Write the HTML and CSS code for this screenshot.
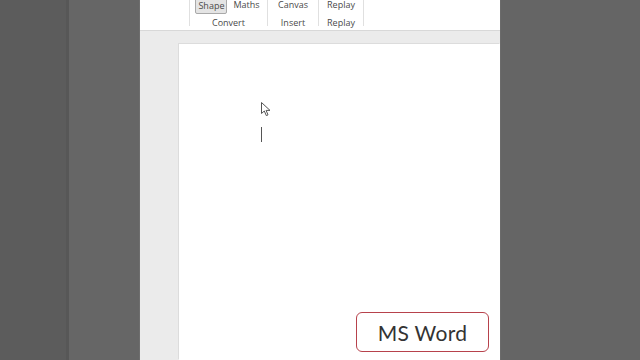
FILE: index.html
```html
<!DOCTYPE html>
<html>
<head>
<meta charset="utf-8">
<link rel="stylesheet" href="styles.css">
</head>
<body>
<div class="stage">
  <div class="side side-left">
    <div class="side-a"></div>
    <div class="side-line"></div>
    <div class="side-b"></div>
  </div>
  <div class="app">
    <div class="ribbon">
      <div class="group group-lead"></div>
      <div class="group g-convert">
        <div class="btns">
          <span class="btn btn-on">Shape</span>
          <span class="btn">Maths</span>
        </div>
        <div class="glabel">Convert</div>
      </div>
      <div class="group g-insert">
        <div class="btns"><span class="btn">Canvas</span></div>
        <div class="glabel">Insert</div>
      </div>
      <div class="group g-replay">
        <div class="btns"><span class="btn">Replay</span></div>
        <div class="glabel">Replay</div>
      </div>
      <div class="group g-rest"></div>
    </div>
    <div class="canvas">
      <div class="page">
        <svg class="pointer" width="11" height="15" viewBox="0 0 11 15">
          <path d="M0.5 0.5 L0.5 11.5 L3.3 9 L5.3 13.6 L7 12.9 L5.1 8.4 L9 8.4 Z" fill="#fff" stroke="#555" stroke-width="1" stroke-linejoin="round"/>
        </svg>
        <div class="caret"></div>
      </div>
    </div>
  </div>
  <div class="side side-right"></div>
  <div class="badge">MS Word</div>
</div>
</body>
</html>
```
FILE: styles.css
```css
* { box-sizing: border-box; }
html, body { margin: 0; padding: 0; }
body { width: 640px; height: 360px; overflow: hidden; background: #666; }
.stage { position: relative; display: flex; width: 640px; height: 360px; }
.side { height: 100%; }
.side-left { width: 140px; display: flex; }
.side-a { width: 66px; background: #5c5c5c; }
.side-line { width: 3px; background: #575757; }
.side-b { flex: 1; background: #666; border-right: 1px solid #6e6e6e; }
.side-right { width: 140px; background: #656565; border-left: 1px solid #6b6b6b; }

.app { width: 360px; height: 100%; display: flex; flex-direction: column; background: #ebebeb; }
.ribbon {
  height: 31px; flex-shrink: 0; background: #fff; border-bottom: 1px solid #d8d8d8;
  display: flex; align-items: flex-start; font-family: "Open Sans", "Noto Sans", sans-serif; font-size: 9px; color: #4a4a4a;
  overflow: hidden;
}
.group { display: flex; flex-direction: column; align-items: center; height: 26px; border-right: 1px solid #e0e0e0; }
.group-lead { width: 50px; }
.g-convert { width: 78px; }
.g-insert { width: 51px; }
.g-replay { width: 45px; }
.g-rest { flex: 1; border-right: none; }
.btns { display: flex; flex-shrink: 0; gap: 4px; height: 16px; margin-top: -3px; align-items: flex-end; }
.btn { display: block; padding: 0 2px 3px; line-height: 11px; }
.btn-on { background: #e4e4e4; border: 1px solid #a9a9a9; border-radius: 2px; padding: 2px 2px 2px; margin-bottom: -1px; }
.glabel { flex-shrink: 0; margin-top: 4px; line-height: 12px; }

.canvas { flex: 1; padding: 13px 0 0 39px; }
.page { position: relative; height: 100%; background: #fff; box-shadow: -1px -1px 0 #dcdcdc; }
.pointer { position: absolute; left: 82px; top: 58px; }
.caret { position: absolute; left: 82px; top: 83px; width: 1px; height: 15px; background: #555; }

.badge {
  position: absolute; left: 356px; top: 312px; width: 133px; height: 40px;
  border: 1.5px solid #b7424c; border-radius: 6px; background: #fff;
  display: flex; align-items: center; justify-content: center;
  font-family: "Lato", "Noto Sans", sans-serif; font-size: 21px; color: #333; letter-spacing: 0.3px;
}
```
